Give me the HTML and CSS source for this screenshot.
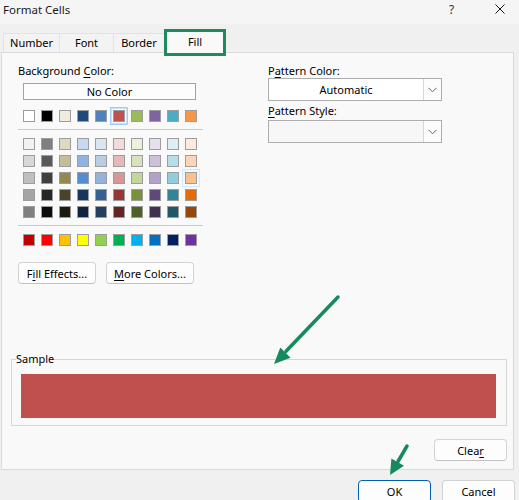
FILE: index.html
```html
<!DOCTYPE html>
<html lang="en">
<head>
<meta charset="utf-8">
<title>Format Cells</title>
<link rel="stylesheet" href="styles.css">
</head>
<body>
<div class="dialog">
  <div class="titlebar">
    <span class="title">Format Cells</span>
    <span class="help">?</span>
    <span class="close"><svg width="10" height="10" viewBox="0 0 10 10"><path d="M0.5 0.5 L9.5 9.5 M9.5 0.5 L0.5 9.5" stroke="#1a1a1a" stroke-width="1" fill="none"/></svg></span>
  </div>
  <div class="tabs">
    <div class="tab t-number">Number</div>
    <div class="tab t-font">Font</div>
    <div class="tab t-border">Border</div>
    <div class="tab t-fill active">Fill</div>
  </div>
  <div class="panel">
    <div class="top">
      <div class="left">
        <div class="label">Background <u>C</u>olor:</div>
        <div class="nocolor">No Color</div>
        <div class="swrow">
          <span class="sw" style="background:#ffffff"></span>
          <span class="sw" style="background:#000000"></span>
          <span class="sw" style="background:#eeece1"></span>
          <span class="sw" style="background:#1f497d"></span>
          <span class="sw" style="background:#4f81bd"></span>
          <span class="sw selected" style="background:#c0504d"></span>
          <span class="sw" style="background:#9bbb59"></span>
          <span class="sw" style="background:#8064a2"></span>
          <span class="sw" style="background:#4bacc6"></span>
          <span class="sw" style="background:#f79646"></span>
        </div>
        <div class="sep sep1"></div>
        <div class="swgrid">
          <span class="sw" style="background:#f2f2f2"></span>
          <span class="sw" style="background:#7f7f7f"></span>
          <span class="sw" style="background:#ddd9c3"></span>
          <span class="sw" style="background:#c6d9f0"></span>
          <span class="sw" style="background:#dbe5f1"></span>
          <span class="sw" style="background:#f2dcdb"></span>
          <span class="sw" style="background:#ebf1dd"></span>
          <span class="sw" style="background:#e5e0ec"></span>
          <span class="sw" style="background:#dbeef3"></span>
          <span class="sw" style="background:#fdeada"></span>

          <span class="sw" style="background:#d8d8d8"></span>
          <span class="sw" style="background:#595959"></span>
          <span class="sw" style="background:#c4bd97"></span>
          <span class="sw" style="background:#8db3e2"></span>
          <span class="sw" style="background:#b8cce4"></span>
          <span class="sw" style="background:#e5b9b7"></span>
          <span class="sw" style="background:#d7e3bc"></span>
          <span class="sw" style="background:#ccc1d9"></span>
          <span class="sw" style="background:#b7dde8"></span>
          <span class="sw" style="background:#fbd5b5"></span>

          <span class="sw" style="background:#bfbfbf"></span>
          <span class="sw" style="background:#3f3f3f"></span>
          <span class="sw" style="background:#938953"></span>
          <span class="sw" style="background:#548dd4"></span>
          <span class="sw" style="background:#95b3d7"></span>
          <span class="sw" style="background:#d99694"></span>
          <span class="sw" style="background:#c3d69b"></span>
          <span class="sw" style="background:#b2a2c7"></span>
          <span class="sw" style="background:#92cddc"></span>
          <span class="sw hover" style="background:#fac08f"></span>

          <span class="sw" style="background:#a5a5a5"></span>
          <span class="sw" style="background:#262626"></span>
          <span class="sw" style="background:#494429"></span>
          <span class="sw" style="background:#17365d"></span>
          <span class="sw" style="background:#366092"></span>
          <span class="sw" style="background:#953734"></span>
          <span class="sw" style="background:#76923c"></span>
          <span class="sw" style="background:#5f497a"></span>
          <span class="sw" style="background:#31859b"></span>
          <span class="sw" style="background:#e36c09"></span>

          <span class="sw" style="background:#7f7f7f"></span>
          <span class="sw" style="background:#0c0c0c"></span>
          <span class="sw" style="background:#1d1b10"></span>
          <span class="sw" style="background:#0f243e"></span>
          <span class="sw" style="background:#244061"></span>
          <span class="sw" style="background:#632423"></span>
          <span class="sw" style="background:#4f6128"></span>
          <span class="sw" style="background:#3f3151"></span>
          <span class="sw" style="background:#205867"></span>
          <span class="sw" style="background:#974806"></span>
        </div>
        <div class="sep sep2"></div>
        <div class="swrow std">
          <span class="sw" style="background:#c00000"></span>
          <span class="sw" style="background:#ff0000"></span>
          <span class="sw" style="background:#ffc000"></span>
          <span class="sw" style="background:#ffff00"></span>
          <span class="sw" style="background:#92d050"></span>
          <span class="sw" style="background:#00b050"></span>
          <span class="sw" style="background:#00b0f0"></span>
          <span class="sw" style="background:#0070c0"></span>
          <span class="sw" style="background:#002060"></span>
          <span class="sw" style="background:#7030a0"></span>
        </div>
        <div class="btnrow">
          <div class="btn b-fill">F<u>i</u>ll Effects...</div>
          <div class="btn b-more"><u>M</u>ore Colors...</div>
        </div>
      </div>
      <div class="right">
        <div class="label">P<u>a</u>ttern Color:</div>
        <div class="select">
          <span class="value">Automatic</span>
          <span class="arrow"><svg width="9" height="6" viewBox="0 0 9 6"><path d="M0.5 0.8 L4.5 4.8 L8.5 0.8" stroke="#666" stroke-width="1" fill="none"/></svg></span>
        </div>
        <div class="label label2"><u>P</u>attern Style:</div>
        <div class="select disabled">
          <span class="value"></span>
          <span class="arrow"><svg width="9" height="6" viewBox="0 0 9 6"><path d="M0.5 0.8 L4.5 4.8 L8.5 0.8" stroke="#666" stroke-width="1" fill="none"/></svg></span>
        </div>
      </div>
    </div>
    <fieldset class="sample">
      <legend>Sample</legend>
      <div class="preview"></div>
    </fieldset>
    <div class="clearrow">
      <div class="btn b-clear">Clea<u>r</u></div>
    </div>
  </div>
  <div class="footer">
    <div class="btn b-ok">OK</div>
    <div class="btn b-cancel">Cancel</div>
  </div>
  <svg class="annot" width="519" height="500" viewBox="0 0 519 500">
    <line x1="338" y1="297" x2="286" y2="351.3" stroke="#168a5e" stroke-width="3.5" stroke-linecap="round"/>
    <polygon points="274,364 290.5,357.8 280.3,347.6" fill="#168a5e"/>
    <line x1="407" y1="446" x2="398" y2="461.5" stroke="#168a5e" stroke-width="3.5" stroke-linecap="round"/>
    <polygon points="390,475 404,465.8 391.4,458.4" fill="#168a5e"/>
  </svg>
</div>
</body>
</html>
```
FILE: styles.css
```css
* { box-sizing: border-box; }

html, body {
  margin: 0;
  padding: 0;
}

body {
  width: 519px;
  height: 500px;
  overflow: hidden;
  background: #f0f0f0;
  font-family: "Noto Sans", "Segoe UI", sans-serif;
  font-size: 11px;
  color: #000;
}

.dialog {
  position: relative;
  width: 519px;
  height: 500px;
}

u { text-decoration: underline; text-underline-offset: 2px; }

/* Title bar */
.titlebar {
  height: 24px;
  display: flex;
  align-items: center;
  background: #f5f5f5;
  padding-left: 3px;
}
.title {
  font-size: 11.5px;
  color: #1a1a1a;
  flex: 1;
  margin-top: -6px;
}
.help {
  width: 10px;
  font-size: 12px;
  color: #333;
  margin-right: 36px;
  margin-top: -5px;
}
.close {
  display: flex;
  width: 10px;
  margin-right: 14px;
  margin-top: -6px;
}

/* Tabs */
.tabs {
  height: 28px;
  display: flex;
  align-items: flex-end;
  padding-left: 3px;
}
.tab {
  height: 19px;
  display: flex;
  align-items: center;
  justify-content: center;
  background: #f3f3f3;
  border-top: 1px solid #e2e2e2;
  border-left: 1px solid #e2e2e2;
  font-size: 11px;
  padding-bottom: 1px;
}
.t-number { width: 56px; }
.t-font { width: 54px; }
.t-border { width: 51px; }
.tab.active {
  width: 62px;
  height: 27px;
  margin-bottom: -4px;
  background: #f9f9f9;
  border: 3px solid #1e8a5e;
  position: relative;
  z-index: 2;
  padding-bottom: 3px;
}

/* Panel */
.panel {
  margin-left: 1px;
  width: 513px;
  height: 418px;
  border: 1px solid #dadada;
  background: #f9f9f9;
  position: relative;
  z-index: 1;
}

.top {
  display: flex;
  padding: 10px 0 0 16px;
}
.left { width: 185px; }
.right { margin-left: 65px; width: 174px; }

.label {
  height: 15px;
  line-height: 15px;
  white-space: nowrap;
}
.label2 { margin-top: 2px; }

.nocolor {
  margin: 5px 0 0 5px;
  width: 173px;
  height: 17px;
  border: 1px solid #a3a3a3;
  background: #fdfdfd;
  display: flex;
  align-items: center;
  justify-content: center;
}

.swrow {
  display: flex;
  gap: 6px;
  padding-left: 5px;
  margin-top: 10px;
}
.swrow.std { margin-top: 8px; }

.swgrid {
  display: grid;
  grid-template-columns: repeat(10, 12px);
  column-gap: 6px;
  row-gap: 5px;
  padding-left: 5px;
  margin-top: 8px;
}

.sw {
  display: block;
  width: 12px;
  height: 12px;
  border: 1px solid #9d9d9d;
}
.sw.selected {
  box-shadow: 0 0 0 1px #f9f9f9, 0 0 0 2px #cbe5f8, 0 0 0 3px #9fcdf0;
}
.sw.hover {
  box-shadow: 0 0 0 2px #f4f9fd, 0 0 0 3px #d2e8f9;
}

.sep {
  height: 1px;
  background: #cacaca;
  width: 185px;
}
.sep1 { margin-top: 7px; }
.sep2 { margin-top: 7px; }

.btnrow {
  display: flex;
  gap: 10px;
  margin-top: 16px;
}

.btn {
  height: 22px;
  display: flex;
  align-items: center;
  justify-content: center;
  background: #fdfdfd;
  border: 1px solid #d3d3d3;
  border-bottom-color: #c2c2c2;
  border-radius: 4px;
  white-space: nowrap;
}
.b-fill { width: 78px; }
.b-more { width: 88px; }

.select {
  display: flex;
  height: 23px;
  border: 1px solid #adadad;
  background: #ffffff;
}
.select.disabled { background: #f7f7f7; margin-top: 2px; }
.select .value {
  flex: 1;
  display: flex;
  align-items: center;
  justify-content: center;
}
.select .arrow {
  width: 18px;
  display: flex;
  align-items: center;
  justify-content: center;
  border-left: 1px solid #d6d6d6;
  background: #fcfcfc;
  padding-top: 1px;
}

/* Sample */
.sample {
  margin: 68px 6px 0 9px;
  padding: 8px 10px 7px 9px;
  border: 1px solid #d6d6d6;
  min-width: 0;
}
.sample legend {
  padding: 0;
  margin-left: -5px;
  line-height: 14px;
  font-size: 11px;
}
.preview {
  height: 44px;
  background: #c0504d;
}

.clearrow {
  display: flex;
  justify-content: flex-end;
  margin-top: 13px;
  padding-right: 6px;
}
.b-clear { width: 73px; }

/* Footer */
.footer {
  display: flex;
  justify-content: flex-end;
  gap: 11px;
  padding-top: 10px;
  padding-right: 4px;
}
.footer .btn { width: 73px; height: 23px; }
.b-ok { border: 1px solid #005fb8; }

.annot {
  position: absolute;
  left: 0;
  top: 0;
  pointer-events: none;
  z-index: 5;
}
```
